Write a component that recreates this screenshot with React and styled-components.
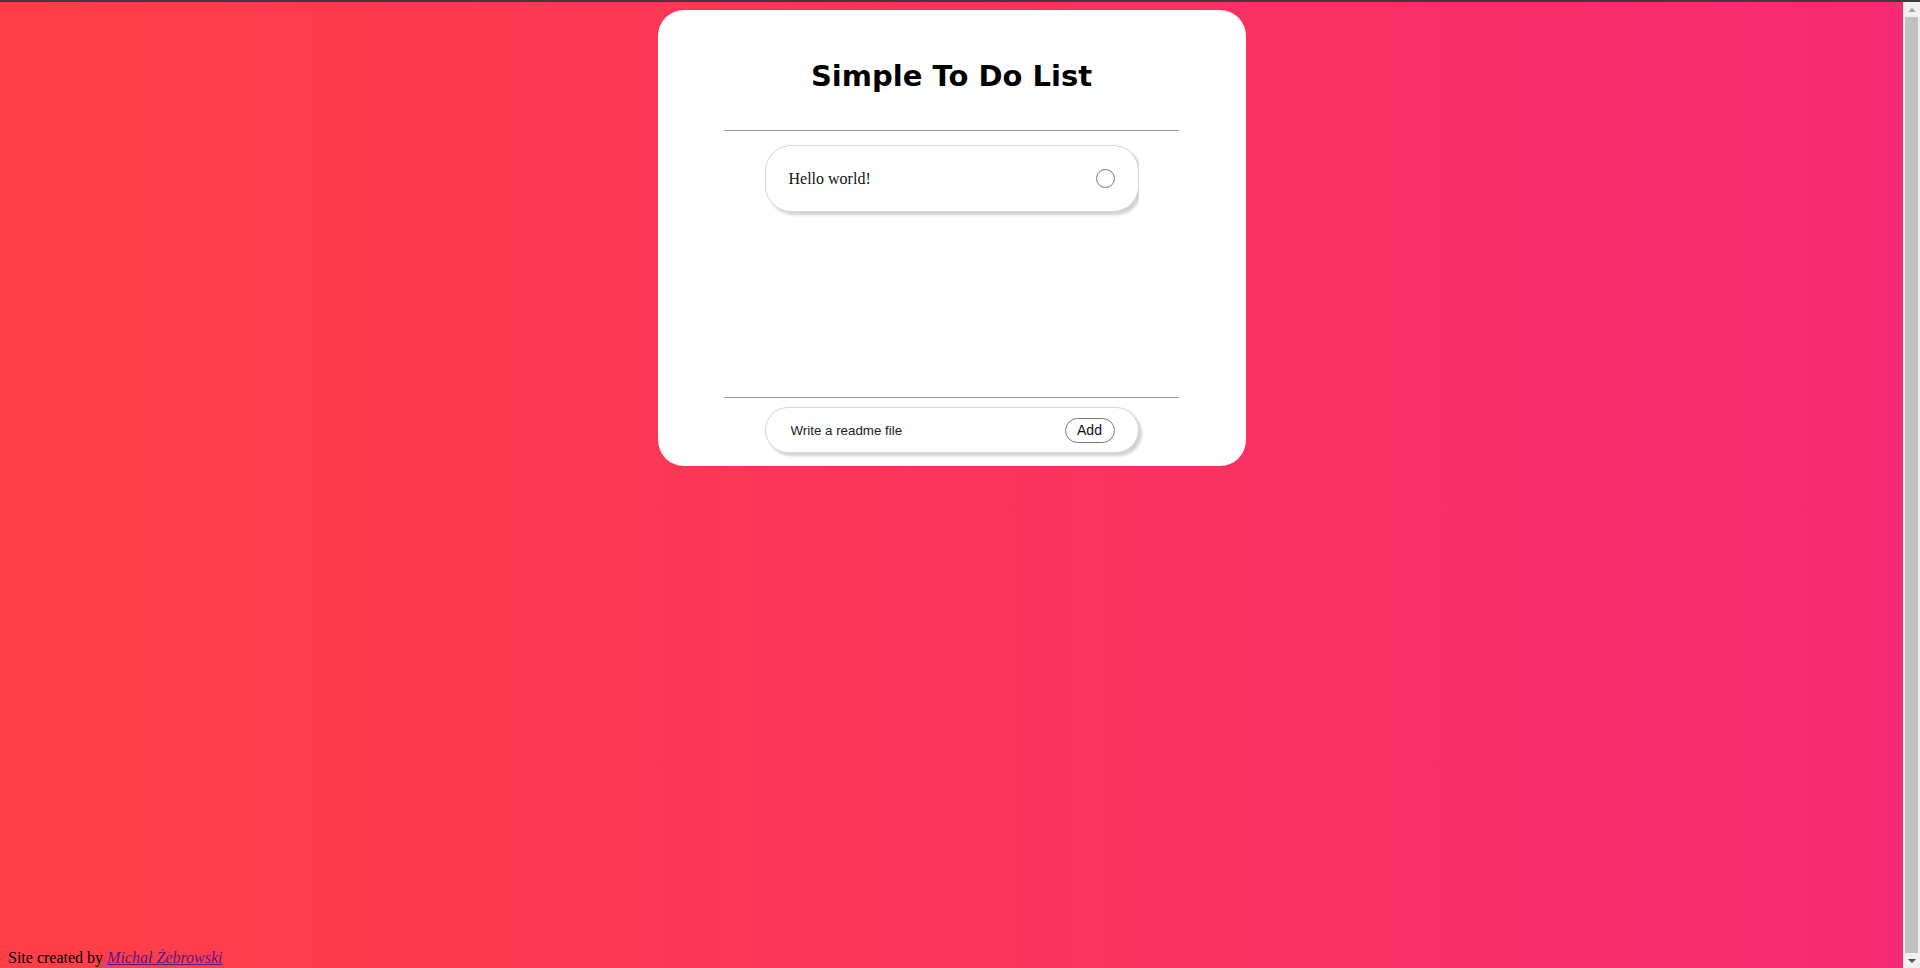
import React, { useState } from 'react';
import styled, { createGlobalStyle } from 'styled-components';

const GlobalStyle = createGlobalStyle`
  html, body {
    margin: 0;
    padding: 0;
    overflow: hidden;
  }

  body {
    font-family: "Liberation Serif", "Times New Roman", serif;
    font-size: 16px;
  }
`;

const Screen = styled.div`
  height: 100vh;
  box-sizing: border-box;
  border-top: 2px solid #3d3a3c;
  display: flex;
`;

const Page = styled.div`
  flex: 1;
  background: linear-gradient(to right, #ff3f46, #f72a72);
  display: flex;
  flex-direction: column;
  overflow: hidden;
`;

// static window scrollbar, as in the captured browser
const Scrollbar = styled.div`
  width: 17px;
  background: #f0f0f0;
  display: flex;
  flex-direction: column;
  align-items: center;
  padding: 0 2px;
  box-sizing: border-box;
`;

const Arrow = styled.span`
  height: 15px;
  display: flex;
  align-items: center;
  justify-content: center;
  color: ${(p) => (p.down ? '#505050' : '#a3a3a3')};

  &::before {
    content: '';
    border-left: 4px solid transparent;
    border-right: 4px solid transparent;
    ${(p) => (p.down ? 'border-top: 4px solid currentColor;' : 'border-bottom: 4px solid currentColor;')}
  }
`;

const Thumb = styled.div`
  flex: 1;
  width: 100%;
  background: #c1c1c1;
`;

const Card = styled.main`
  width: 588px;
  margin: 8px auto 0;
  background: #fff;
  border-radius: 26px;
  padding: 47px 0 13px;
  box-sizing: border-box;
  display: flex;
  flex-direction: column;
  align-items: center;
`;

const Title = styled.h1`
  margin: 0 0 35px;
  font-family: "Comic Sans MS", "DejaVu Sans", sans-serif;
  font-weight: bold;
  font-size: 29px;
  line-height: 38px;
  color: #000;
`;

const Divider = styled.div`
  width: 455px;
  border-top: 1px solid #9b9b9b;
`;

const List = styled.ul`
  list-style: none;
  margin: 0;
  padding: 14px 0 0;
  height: 266px;
  box-sizing: border-box;
  overflow-y: auto;
  display: flex;
  flex-direction: column;
  gap: 12px;
`;

const Pill = styled.div`
  width: 374px;
  box-sizing: border-box;
  border: 1px solid #d6d6d6;
  border-radius: 26px;
  background: #fff;
  box-shadow: 3px 3px 3px rgba(0, 0, 0, 0.18);
  display: flex;
  align-items: center;
  justify-content: space-between;
`;

const Item = styled(Pill).attrs({ as: 'li' })`
  height: 67px;
  padding: 0 23px;
  font-size: 16px;
  color: #111;
`;

const Check = styled.button`
  width: 19px;
  height: 19px;
  padding: 0;
  border-radius: 50%;
  border: 1px solid #777;
  background: ${(p) => (p.$done ? '#777' : '#fff')};
  cursor: pointer;
`;

const Form = styled(Pill).attrs({ as: 'form' })`
  height: 46px;
  margin-top: 9px;
  padding: 0 23px 0 25px;
`;

const Input = styled.input`
  flex: 1;
  border: none;
  outline: none;
  padding: 0;
  font-family: "Liberation Sans", Arial, sans-serif;
  font-size: 13.33px;
  color: #222;
  background: transparent;
`;

const AddButton = styled.button`
  width: 50px;
  height: 25px;
  border: 1px solid #767676;
  border-radius: 13px;
  background: #fff;
  font-family: "Liberation Sans", Arial, sans-serif;
  font-size: 14px;
  color: #111;
  padding: 0;
  cursor: pointer;
`;

const Footer = styled.footer`
  margin-top: auto;
  padding: 0 0 1px 8px;
  line-height: 18px;
  color: #000;

  a {
    color: #551a8b;
    font-style: italic;
  }
`;

const App = () => {
  const [todos, setTodos] = useState([{ id: 1, text: 'Hello world!', done: false }]);
  const [text, setText] = useState('Write a readme file');

  const handleSubmit = (e) => {
    e.preventDefault();
    if (!text.trim()) return;
    setTodos([...todos, { id: Date.now(), text, done: false }]);
    setText('');
  };

  const toggle = (id) => {
    setTodos(todos.map((t) => (t.id === id ? { ...t, done: !t.done } : t)));
  };

  return (
    <>
      <GlobalStyle />
      <Screen>
        <Page>
          <Card>
            <Title>Simple To Do List</Title>
            <Divider />
            <List>
              {todos.map((todo) => (
                <Item key={todo.id}>
                  <span>{todo.text}</span>
                  <Check $done={todo.done} onClick={() => toggle(todo.id)} aria-label="done" />
                </Item>
              ))}
            </List>
            <Divider />
            <Form onSubmit={handleSubmit}>
              <Input value={text} onChange={(e) => setText(e.target.value)} />
              <AddButton type="submit">Add</AddButton>
            </Form>
          </Card>
          <Footer>
            Site created by <a href="#">Michał Żebrowski</a>
          </Footer>
        </Page>
        <Scrollbar>
          <Arrow />
          <Thumb />
          <Arrow down />
        </Scrollbar>
      </Screen>
    </>
  );
};

export default App;
